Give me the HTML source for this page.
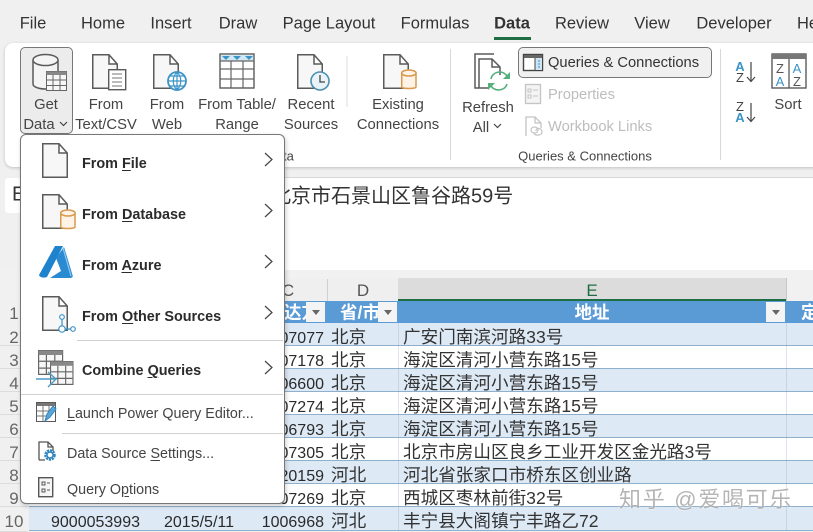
<!DOCTYPE html>
<html><head><meta charset="utf-8">
<style>
html,body{margin:0;padding:0}
#p{position:relative;width:813px;height:532px;overflow:hidden;background:#f0f0f0;font-family:"Liberation Sans","Noto Sans CJK SC",sans-serif;color:#262626}
.a{position:absolute}
.t{position:absolute;white-space:nowrap;transform:translate(-50%,-50%)}
.l{position:absolute;white-space:nowrap;transform:translateY(-50%)}
.tab{font-size:16.5px;color:#333}
.rb{font-size:14.8px;color:#444;text-align:center;line-height:20px}
.row{position:absolute;left:29px;width:784px;height:22px;border-bottom:1px solid #8fb0cc}
.band{background:#dde9f5}
.c{position:absolute;font-size:16px;line-height:23px;top:4px;white-space:nowrap;color:#2a2a2a}
.z{font-size:17.6px;color:#333;top:3px}
.rn{position:absolute;left:0;width:28px;height:22px;border-bottom:1px solid #dcdcdc;font-size:17px;line-height:29px;text-align:center;color:#666;background:#f0f0f0;overflow:hidden}
.m{font-size:14.4px;font-weight:bold;color:#2b2b2b}
.n{font-size:14.3px;color:#444}
.fb{position:absolute;width:19px;height:20px;top:302px;background:#f4f4f4}
.fb:after{content:"";position:absolute;left:6px;top:8px;border:4px solid transparent;border-top:5px solid #666;border-bottom:0}
u{text-underline-offset:2px}
</style></head><body>
<div id="p">
<!-- ribbon -->
<div class="a" style="left:5px;top:43px;width:820px;height:124px;background:#fff;border-radius:8px;box-shadow:0 1px 3px rgba(0,0,0,.2)"></div>
<!-- tabs -->
<div class="t tab" style="left:33px;top:24px">File</div>
<div class="t tab" style="left:103px;top:24px">Home</div>
<div class="t tab" style="left:171px;top:24px">Insert</div>
<div class="t tab" style="left:238px;top:24px">Draw</div>
<div class="t tab" style="left:329px;top:24px">Page Layout</div>
<div class="t tab" style="left:435px;top:24px">Formulas</div>
<div class="t tab" style="left:512px;top:24px;font-weight:bold">Data</div>
<div class="a" style="left:494px;top:37px;width:37px;height:2.5px;background:#1f6e43"></div>
<div class="t tab" style="left:582px;top:24px">Review</div>
<div class="t tab" style="left:652px;top:24px">View</div>
<div class="t tab" style="left:734px;top:24px">Developer</div>
<div class="l tab" style="left:797px;top:24px">He</div>
<!-- buttons -->
<div class="a" style="left:20px;top:47px;width:51px;height:85px;background:#ececec;border:1px solid #777;border-radius:5px"></div>
<div class="a" style="left:518px;top:47px;width:192px;height:29px;background:#f0f0f0;border:1px solid #777;border-radius:5px"></div>
<div class="t rb" style="left:46px;top:105px">Get</div>
<div class="t rb" style="left:39px;top:125px">Data</div>
<div class="t rb" style="left:106px;top:105px">From</div>
<div class="t rb" style="left:106px;top:125px">Text/CSV</div>
<div class="t rb" style="left:167px;top:105px">From</div>
<div class="t rb" style="left:167px;top:125px">Web</div>
<div class="t rb" style="left:237px;top:105px">From Table/</div>
<div class="t rb" style="left:237px;top:125px">Range</div>
<div class="t rb" style="left:311px;top:105px">Recent</div>
<div class="t rb" style="left:311px;top:125px">Sources</div>
<div class="t rb" style="left:398px;top:105px">Existing</div>
<div class="t rb" style="left:398px;top:125px">Connections</div>
<div class="t rb" style="left:488px;top:108px">Refresh</div>
<div class="t rb" style="left:481px;top:128px">All</div>
<div class="l" style="left:548px;top:63px;font-size:14.7px;color:#333">Queries &amp; Connections</div>
<div class="l" style="left:548px;top:95px;font-size:14.7px;color:#bdbdbd">Properties</div>
<div class="l" style="left:548px;top:127px;font-size:14.7px;color:#bdbdbd">Workbook Links</div>
<div class="t" style="left:585px;top:156px;font-size:13px;color:#444">Queries &amp; Connections</div>
<div class="l" style="left:283px;top:156px;font-size:13px;color:#444">ta</div>
<div class="t rb" style="left:788px;top:105px">Sort</div>
<!-- formula bar -->
<div class="a" style="left:5px;top:178px;width:20px;height:35px;background:#fff;border-radius:3px"></div>
<div class="l" style="left:12px;top:195px;font-size:20px;color:#333">E</div>
<div class="a" style="left:25px;top:177px;width:800px;height:92px;background:#fff;border-top:1px solid #d8d8d8;border-bottom:1px solid #d4d4d4"></div>
<div class="l" style="left:271px;top:194px;font-size:20px;color:#333">北京市石景山区鲁谷路59号</div>
<!-- column headers -->
<div class="a" style="left:0;top:270px;width:813px;height:31px;background:#f1f1f1"></div>
<div class="a" style="left:283px;top:279px;width:44px;height:22px;background:#efefef;border-right:1px solid #d0d0d0"></div>
<div class="a" style="left:328px;top:279px;width:70px;height:22px;background:#efefef"></div>
<div class="a" style="left:398px;top:278px;width:388px;height:21px;background:#dcdcdc"></div>
<div class="a" style="left:398px;top:299px;width:388px;height:2px;background:#1f6e43"></div>
<div class="a" style="left:786px;top:278px;width:1px;height:23px;background:#c8c8c8"></div>
<div class="t" style="left:288px;top:291px;font-size:17px;color:#555">C</div>
<div class="t" style="left:363px;top:291px;font-size:17px;color:#555">D</div>
<div class="t" style="left:592px;top:291px;font-size:17px;color:#1f6e43">E</div>
<!-- header row -->
<div class="a" style="left:29px;top:301px;width:784px;height:22px;background:#5b9bd5"></div>
<div class="rn" style="top:301px;line-height:26px">1</div>
<div class="l" style="left:284px;top:312px;font-size:17.5px;font-weight:bold;color:#fff;width:22px;overflow:hidden">达方</div>
<div class="l" style="left:340px;top:312px;font-size:17.5px;font-weight:bold;color:#fff;width:38px;overflow:hidden">省/市</div>
<div class="t" style="left:592px;top:312px;font-size:17.5px;font-weight:bold;color:#fff">地址</div>
<div class="l" style="left:801px;top:312px;font-size:17.5px;font-weight:bold;color:#fff">定</div>
<div class="fb" style="left:306px"></div><div class="fb" style="left:378px"></div><div class="fb" style="left:766px"></div>
<!-- rows -->
<div class="row band" style="top:323px"><div class="c" style="right:489px">1007077</div><div class="c z" style="left:302px">北京</div><div class="c z" style="left:374px">广安门南滨河路33号</div></div>
<div class="row" style="top:346px;background:#fff"><div class="c" style="right:489px">1007178</div><div class="c z" style="left:302px">北京</div><div class="c z" style="left:374px">海淀区清河小营东路15号</div></div>
<div class="row band" style="top:369px"><div class="c" style="right:489px">1006600</div><div class="c z" style="left:302px">北京</div><div class="c z" style="left:374px">海淀区清河小营东路15号</div></div>
<div class="row" style="top:392px;background:#fff"><div class="c" style="right:489px">1007274</div><div class="c z" style="left:302px">北京</div><div class="c z" style="left:374px">海淀区清河小营东路15号</div></div>
<div class="row band" style="top:415px"><div class="c" style="right:489px">1006793</div><div class="c z" style="left:302px">北京</div><div class="c z" style="left:374px">海淀区清河小营东路15号</div></div>
<div class="row" style="top:438px;background:#fff"><div class="c" style="right:489px">1007305</div><div class="c z" style="left:302px">北京</div><div class="c z" style="left:374px">北京市房山区良乡工业开发区金光路3号</div></div>
<div class="row band" style="top:461px"><div class="c" style="right:489px">1020159</div><div class="c z" style="left:302px">河北</div><div class="c z" style="left:374px">河北省张家口市桥东区创业路</div></div>
<div class="row" style="top:484px;background:#fff"><div class="c" style="right:489px">1007269</div><div class="c z" style="left:302px">北京</div><div class="c z" style="left:374px">西城区枣林前街32号</div></div>
<div class="row band" style="top:507px;height:23px"><div class="c" style="left:22px">9000053993</div><div class="c" style="left:135px">2015/5/11</div><div class="c" style="right:489px">1006968</div><div class="c z" style="left:302px">河北</div><div class="c z" style="left:374px">丰宁县大阁镇宁丰路乙72</div></div>
<div class="a" style="left:398px;top:323px;width:1px;height:208px;background:rgba(120,150,180,.25)"></div>
<div class="a" style="left:786px;top:323px;width:1px;height:208px;background:rgba(120,150,180,.25)"></div>
<div class="rn" style="top:323px">2</div><div class="rn" style="top:346px">3</div><div class="rn" style="top:369px">4</div><div class="rn" style="top:392px">5</div><div class="rn" style="top:415px">6</div><div class="rn" style="top:438px">7</div><div class="rn" style="top:461px">8</div><div class="rn" style="top:484px">9</div><div class="rn" style="top:507px;height:24px">10</div>
<div class="l" style="left:619px;top:498px;font-size:22px;color:#adadad;letter-spacing:1.7px;opacity:.9;text-shadow:0 0 2px #fff">知乎 @爱喝可乐</div>
<!-- menu -->
<div class="a" style="left:20px;top:134px;width:263px;height:368px;background:#fff;border:1px solid #777;border-radius:6px;box-shadow:1px 2px 5px rgba(0,0,0,.2)"></div>
<div class="l m" style="left:82px;top:164px">From <u>F</u>ile</div>
<div class="l m" style="left:82px;top:215px">From <u>D</u>atabase</div>
<div class="l m" style="left:82px;top:266px">From <u>A</u>zure</div>
<div class="l m" style="left:82px;top:317px">From <u>O</u>ther Sources</div>
<div class="l m" style="left:82px;top:371px">Combine <u>Q</u>ueries</div>
<div class="l n" style="left:67px;top:414px"><u>L</u>aunch Power Query Editor...</div>
<div class="l n" style="left:67px;top:454px">Data Source <u>S</u>ettings...</div>
<div class="l n" style="left:67px;top:490px">Query O<u>p</u>tions</div>
<div class="a" style="left:77px;top:340px;width:206px;height:1px;background:#d0d0d0"></div>
<div class="a" style="left:21px;top:394px;width:262px;height:1px;background:#d0d0d0"></div>
<div class="a" style="left:62px;top:433px;width:221px;height:1px;background:#d0d0d0"></div>
<!-- icons -->
<svg class="a" style="left:0;top:0" width="813" height="532" viewBox="0 0 813 532" fill="none">
<defs>
<path id="doc" d="M.75.75H17L25.25 10V34.25H.75Z M17 .75V10H25.25" fill="#f7f7f7" stroke="#5a5a5a" stroke-width="1.5"/>
<g id="cyl"><path d="M.75 4V18C.75 20 15 20 15 18V4" fill="#fdf3e6" stroke="#d99a4e" stroke-width="1.5"/><ellipse cx="7.9" cy="4" rx="7.2" ry="3" fill="#fdf3e6" stroke="#d99a4e" stroke-width="1.5"/></g>
<g id="chev"><path d="M0 0L7 6.5L0 13" stroke="#444" stroke-width="1.2"/></g>
<g id="grid"><rect x=".5" y=".5" width="20" height="19" fill="#f7f7f7" stroke="#666"/><rect x=".5" y=".5" width="20" height="3.500" fill="#888"/><path d="M7 4V20M14 4V20M1 9H20M1 14.500H20" stroke="#666"/></g>
</defs>
<!-- get data -->
<path d="M33 59V84C33 87 40 89 47 89H58V60L33 59Z" fill="#f4f4f4"/>
<path d="M33 60V84C33 87 39 89 46 89M58 60V71" stroke="#5a5a5a" stroke-width="1.5"/>
<ellipse cx="45.500" cy="60" rx="12.500" ry="5.500" fill="#f4f4f4" stroke="#5a5a5a" stroke-width="1.5"/>
<use href="#grid" x="46" y="71"/>
<path d="M60 122L63.500 125.500L67 122" stroke="#444" stroke-width="1.2"/>
<!-- text csv -->
<use href="#doc" x="92" y="54"/>
<rect x="108.700" y="69.700" width="17" height="20" fill="#fff" stroke="#5a5a5a" stroke-width="1.4"/>
<path d="M112 74H122M112 78H122M112 82H122M112 86H122" stroke="#777"/>
<!-- web -->
<use href="#doc" x="153" y="54"/>
<circle cx="177" cy="81" r="9" fill="#fff" stroke="#3b93c6" stroke-width="1.8"/>
<path d="M168 81H186M170 76H184M170 86H184M177 72V90M177 72C172 77 172 85 177 90C182 85 182 77 177 72" stroke="#3b93c6" stroke-width="1.2"/>
<!-- table -->
<rect x="220" y="54" width="34" height="34" fill="#fff" stroke="#5a5a5a" stroke-width="1.4"/>
<rect x="221" y="55" width="32" height="6" fill="#cfe8f3"/>
<path d="M220 61H254M220 69H254M220 79H254M231 61V88M243 61V88" stroke="#666" stroke-width="1.2"/>
<path d="M222 56H230L226 60ZM233 56H241L237 60ZM245 56H253L249 60Z" fill="#3b93c6"/>
<!-- recent -->
<use href="#doc" x="297" y="54"/>
<circle cx="320" cy="81" r="9" fill="#e8f4fa" stroke="#4f8fb0" stroke-width="1.6"/>
<path d="M320 75V82H325" stroke="#444" stroke-width="1.3"/>
<path d="M347 56V107" stroke="#ddd"/>
<!-- existing -->
<use href="#doc" x="383" y="54"/>
<use href="#cyl" x="401" y="69"/>
<path d="M450.500 49V160M720.500 49V160" stroke="#d8d8d8"/>
<!-- refresh -->
<path d="M479 88H475V54H494" stroke="#5a5a5a" stroke-width="1.5"/>
<path d="M479 88V59H492L500 67V75M479 88H489" fill="#fff" stroke="#5a5a5a" stroke-width="1.5"/>
<path d="M492 59V67H500" stroke="#5a5a5a" stroke-width="1.5"/>
<path d="M491 79C492 72 502 69 507 76" stroke="#55b07e" stroke-width="1.6"/>
<path d="M510 72V79H503Z" fill="#55b07e"/>
<path d="M507 84C505 91 495 92 491 86" stroke="#55b07e" stroke-width="1.6"/>
<path d="M488 90V83H495Z" fill="#55b07e"/>
<path d="M494 124L497.500 127.500L501 124" stroke="#444" stroke-width="1.2"/>
<!-- queries icon -->
<rect x="523.500" y="54.500" width="19" height="16" fill="#fff" stroke="#444" stroke-width="1.4"/>
<rect x="524" y="55" width="18" height="3" fill="#666"/>
<rect x="535" y="58" width="7" height="12" fill="#cde4f2"/>
<path d="M535 58V70" stroke="#444"/>
<path d="M538 61H540M538 64H540M538 67H540" stroke="#3b93c6"/>
<!-- properties -->
<rect x="525.500" y="84.500" width="15" height="19" fill="#f4f4f4" stroke="#c4c4c4" stroke-width="1.3"/>
<path d="M528 89H531V92H528ZM528 95H531V98H528ZM533 90H538M533 96H538" stroke="#c4c4c4"/>
<!-- workbook links -->
<path d="M526 136V117H535L541 123V128" stroke="#c4c4c4" stroke-width="1.3"/>
<path d="M535 117V123H541" stroke="#c4c4c4" stroke-width="1.3"/>
<path d="M531 130C531 126 538 126 538 130C538 134 531 134 531 130M536 131C536 127 542 128 542 132C542 136 534 136 534 133" stroke="#c4c4c4" stroke-width="1.2"/>
<!-- sort -->
<rect x="772" y="54" width="34" height="34" fill="#fff" stroke="#5a5a5a" stroke-width="1.4"/>
<rect x="772" y="54" width="34" height="5" fill="#777"/>
<path d="M789 59V88" stroke="#5a5a5a" stroke-width="1.3"/>
<text x="780" y="73" font-size="13" fill="#555" text-anchor="middle" font-family="Liberation Sans">Z</text>
<text x="780" y="86" font-size="13" fill="#3b93c6" text-anchor="middle" font-family="Liberation Sans">A</text>
<text x="797" y="73" font-size="13" fill="#3b93c6" text-anchor="middle" font-family="Liberation Sans">A</text>
<text x="797" y="86" font-size="13" fill="#555" text-anchor="middle" font-family="Liberation Sans">Z</text>
<text x="740" y="71" font-size="13" fill="#3b93c6" text-anchor="middle" font-weight="bold" font-family="Liberation Sans">A</text>
<text x="740" y="82" font-size="13" fill="#444" text-anchor="middle" font-family="Liberation Sans">Z</text>
<path d="M751 62V81M747 77L751 81.500L755 77" stroke="#444" stroke-width="1.2"/>
<text x="740" y="111" font-size="13" fill="#444" text-anchor="middle" font-family="Liberation Sans">Z</text>
<text x="740" y="122" font-size="13" fill="#3b93c6" text-anchor="middle" font-weight="bold" font-family="Liberation Sans">A</text>
<path d="M751 103V121M747 117L751 121.500L755 117" stroke="#444" stroke-width="1.2"/>
<!-- menu icons -->
<use href="#doc" x="42" y="143"/>
<use href="#doc" x="42" y="194"/>
<use href="#cyl" x="60" y="209"/>
<use href="#doc" x="42" y="296"/>
<g stroke="#3b93c6" stroke-width="1.2" fill="#fff"><path d="M62 319V326M65 329H71"/><circle cx="62" cy="317" r="2.300"/><circle cx="62" cy="329" r="3.200"/><circle cx="73" cy="329" r="2.300"/></g>
<!-- azure -->
<path d="M39 275L55 246H63L47 277C45 278 40 278 39 275Z" fill="#1f82cc"/>
<path d="M56 258L61 271L50 278H70C73 278 73 276 72.500 275L64 247Z" fill="#2a8ad2"/>
<path d="M63 248L71 276" stroke="#8cc8ee" stroke-width="1.2"/>
<!-- chevrons -->
<use href="#chev" x="265" y="153"/>
<use href="#chev" x="265" y="204"/>
<use href="#chev" x="265" y="255"/>
<use href="#chev" x="265" y="306"/>
<use href="#chev" x="265" y="361"/>
<!-- combine -->
<g transform="translate(38,350) scale(1.2,1.25)"><use href="#grid"/></g>
<g transform="translate(50,361) scale(1.12,1.2)"><use href="#grid"/></g>
<path d="M36 379H55M48 372L56 379L48 387" stroke="#4d9ccb" stroke-width="1.4"/>
<!-- launch -->
<rect x="36.500" y="402.500" width="19" height="19" fill="#fff" stroke="#5a5a5a"/>
<rect x="37" y="403" width="18" height="3" fill="#777"/>
<path d="M37 411H52M37 416H48M43 406V421M49 406V415" stroke="#777"/>
<path d="M45 421L47 414L53 406L56 409L50 417Z" fill="#5aa6d6" stroke="#2f86bf"/>
<!-- data source -->
<path d="M39 460V442H48L53 447V451M39 460H45M48 442V447H53" stroke="#555" stroke-width="1.3"/>
<circle cx="50" cy="455" r="4.500" stroke="#2f86bf" stroke-width="2.500" stroke-dasharray="2.200 .8"/>
<circle cx="50" cy="455" r="3" stroke="#2f86bf" stroke-width="1.400"/>
<!-- options -->
<rect x="38.700" y="477.700" width="14" height="19" fill="#f6f6f6" stroke="#555" stroke-width="1.4"/>
<path d="M42 482H45V485H42ZM42 489H45V492H42ZM47 483H50M47 490H50" stroke="#555"/>
</svg>
</div>
</body></html>
